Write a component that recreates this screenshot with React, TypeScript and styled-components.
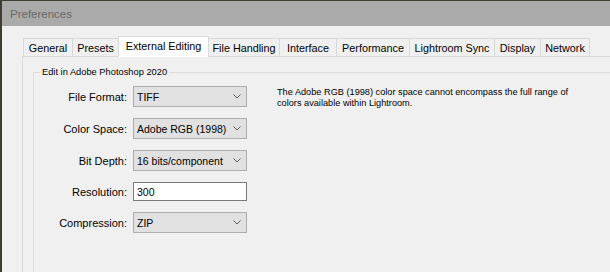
import React from "react";
import styled, { createGlobalStyle } from "styled-components";

const GlobalStyle = createGlobalStyle`
  html, body {
    margin: 0;
    padding: 0;
    overflow: hidden;
    background: #3f3d33;
  }
  body {
    font-family: "Liberation Sans", Arial, sans-serif;
    color: #000;
  }
`;

const tabs = [
  { label: "General", width: 50 },
  { label: "Presets", width: 47 },
  { label: "External Editing", width: 91 },
  { label: "File Handling", width: 72 },
  { label: "Interface", width: 58 },
  { label: "Performance", width: 74 },
  { label: "Lightroom Sync", width: 86 },
  { label: "Display", width: 47 },
  { label: "Network", width: 50 },
];

const Chevron = () => (
  <svg width="8" height="5" viewBox="0 0 8 5">
    <polyline
      points="0.5,0.5 4,4 7.5,0.5"
      fill="none"
      stroke="#5c5c5c"
      strokeWidth="1"
    />
  </svg>
);

const Select: React.FC<{ value: string }> = ({ value }) => (
  <SelectBoxStyled>
    <span>{value}</span>
    <Chevron />
  </SelectBoxStyled>
);

const App = () => {
  const active = "External Editing";

  return (
    <>
      <GlobalStyle />
      <WindowStyled>
        <TitleBarStyled>Preferences</TitleBarStyled>
        <BodyStyled>
          <TabRowStyled>
            {tabs.map((t) => (
              <TabStyled key={t.label} $w={t.width} $active={t.label === active}>
                {t.label}
              </TabStyled>
            ))}
          </TabRowStyled>
          <PanelStyled>
            <GroupBoxStyled>
              <LegendStyled>Edit in Adobe Photoshop 2020</LegendStyled>
              <GroupContentStyled>
                <FormStyled>
                  <LabelStyled>File Format:</LabelStyled>
                  <Select value="TIFF" />
                  <LabelStyled>Color Space:</LabelStyled>
                  <Select value="Adobe RGB (1998)" />
                  <LabelStyled>Bit Depth:</LabelStyled>
                  <Select value="16 bits/component" />
                  <LabelStyled>Resolution:</LabelStyled>
                  <TextInputStyled>300</TextInputStyled>
                  <LabelStyled>Compression:</LabelStyled>
                  <Select value="ZIP" />
                </FormStyled>
                <NoteStyled>
                  The Adobe RGB (1998) color space cannot encompass the full range of
                  <br />
                  colors available within Lightroom.
                </NoteStyled>
              </GroupContentStyled>
            </GroupBoxStyled>
          </PanelStyled>
        </BodyStyled>
      </WindowStyled>
    </>
  );
};

const WindowStyled = styled.div`
  margin: 1px 0 0 2px;
  width: 608px;
  height: 271px;
  overflow: hidden;
  background: #f0f0f0;
  display: flex;
  flex-direction: column;
`;

const TitleBarStyled = styled.div`
  height: 25px;
  flex-shrink: 0;
  background: #aaaaaa;
  color: #686868;
  font-size: 11.5px;
  display: flex;
  align-items: center;
  padding-left: 8px;
`;

const BodyStyled = styled.div`
  flex: 1;
  min-height: 0;
  display: flex;
  flex-direction: column;
  padding: 10px 0 0 20px;
`;

const TabRowStyled = styled.div`
  display: flex;
  align-items: flex-end;
  height: 20px;
  flex-shrink: 0;
  padding-left: 1px;
`;

const TabStyled = styled.div<{ $w: number; $active?: boolean }>`
  box-sizing: border-box;
  width: ${(p) => p.$w}px;
  height: ${(p) => (p.$active ? 21 : 18)}px;
  margin-right: -1px;
  margin-bottom: ${(p) => (p.$active ? -1 : 0)}px;
  border: 1px solid #d9d9d9;
  border-bottom: none;
  background: ${(p) => (p.$active ? "#ffffff" : "#f0f0f0")};
  position: relative;
  z-index: ${(p) => (p.$active ? 2 : 1)};
  font-size: 10.8px;
  display: flex;
  align-items: center;
  justify-content: center;
  padding-bottom: ${(p) => (p.$active ? 3 : 0)}px;
  white-space: nowrap;
`;

const PanelStyled = styled.div`
  flex: 1;
  min-height: 0;
  border-top: 1px solid #d9d9d9;
  border-left: 1px solid #d9d9d9;
  background: #f0f0f0;
  padding: 15px 0 0 10px;
  display: flex;
  flex-direction: column;
`;

const GroupBoxStyled = styled.div`
  position: relative;
  flex: 1;
  border-top: 1px solid #dcdcdc;
  border-left: 1px solid #dcdcdc;
  padding-top: 13px;
`;

const LegendStyled = styled.div`
  position: absolute;
  top: -6px;
  left: 6px;
  padding: 0 2px;
  background: #f0f0f0;
  font-size: 9.3px;
  line-height: 11px;
  white-space: nowrap;
`;

const GroupContentStyled = styled.div`
  display: flex;
  align-items: flex-start;
`;

const FormStyled = styled.div`
  display: grid;
  grid-template-columns: 93px 114px;
  grid-template-rows: 21px 21px 21px 19px 21px;
  column-gap: 6px;
  row-gap: 11px;
  align-items: center;
`;

const LabelStyled = styled.div`
  text-align: right;
  font-size: 11px;
  white-space: nowrap;
`;

const SelectBoxStyled = styled.div`
  box-sizing: border-box;
  height: 21px;
  border: 1px solid #adadad;
  background: #e1e1e1;
  display: flex;
  align-items: center;
  justify-content: space-between;
  padding: 0 5px 0 3px;
  font-size: 10.5px;
  white-space: nowrap;
`;

const TextInputStyled = styled.div`
  box-sizing: border-box;
  height: 19px;
  border: 1px solid #7a7a7a;
  background: #ffffff;
  display: flex;
  align-items: center;
  padding-left: 3px;
  font-size: 10.5px;
`;

const NoteStyled = styled.div`
  margin: 1px 0 0 30px;
  font-size: 9.2px;
  line-height: 11px;
  white-space: nowrap;
`;

export default App;
